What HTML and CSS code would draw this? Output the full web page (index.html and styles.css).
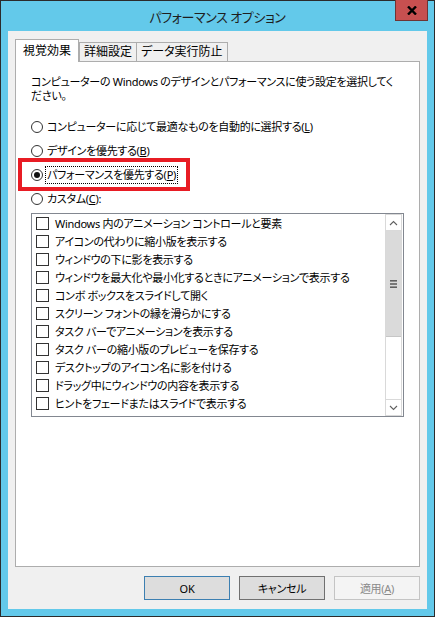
FILE: index.html
```html
<!DOCTYPE html>
<html lang="ja">
<head>
<meta charset="utf-8">
<title>パフォーマンス オプション</title>
<link rel="stylesheet" href="styles.css">
</head>
<body>
<div class="window">
  <div class="titlebar">
    <div class="title">パフォーマンス オプション</div>
    <div class="close">
      <svg width="10" height="9" viewBox="0 0 10 9"><path d="M1 0.5 L9 8.5 M9 0.5 L1 8.5" stroke="#000" stroke-width="2.4" fill="none"/></svg>
    </div>
  </div>
  <div class="client">
    <div class="tabs">
      <div class="tab active">視覚効果</div>
      <div class="tab">詳細設定</div>
      <div class="tab">データ実行防止</div>
    </div>
    <div class="panel">
      <p class="desc">コンピューターの Windows のデザインとパフォーマンスに使う設定を選択してく<br>ださい。</p>
      <div class="radios">
        <div class="radio-row"><span class="radio"></span><span class="label">コンピューターに応じて最適なものを自動的に選択する(<u>L</u>)</span></div>
        <div class="radio-row"><span class="radio"></span><span class="label">デザインを優先する(<u>B</u>)</span></div>
        <div class="radio-row highlight"><span class="radio checked"><span class="dot"></span></span><span class="label focus">パフォーマンスを優先する(<u>P</u>)</span></div>
        <div class="radio-row"><span class="radio"></span><span class="label">カスタム(<u>C</u>):</span></div>
      </div>
      <div class="listbox">
        <div class="items">
          <div class="item"><span class="check"></span>Windows 内のアニメーション コントロールと要素</div>
          <div class="item"><span class="check"></span>アイコンの代わりに縮小版を表示する</div>
          <div class="item"><span class="check"></span>ウィンドウの下に影を表示する</div>
          <div class="item"><span class="check"></span>ウィンドウを最大化や最小化するときにアニメーションで表示する</div>
          <div class="item"><span class="check"></span>コンボ ボックスをスライドして開く</div>
          <div class="item"><span class="check"></span>スクリーン フォントの縁を滑らかにする</div>
          <div class="item"><span class="check"></span>タスク バーでアニメーションを表示する</div>
          <div class="item"><span class="check"></span>タスク バーの縮小版のプレビューを保存する</div>
          <div class="item"><span class="check"></span>デスクトップのアイコン名に影を付ける</div>
          <div class="item"><span class="check"></span>ドラッグ中にウィンドウの内容を表示する</div>
          <div class="item"><span class="check"></span>ヒントをフェードまたはスライドで表示する</div>
        </div>
        <div class="scrollbar">
          <div class="sb-btn"><svg width="9" height="6" viewBox="0 0 9 6"><path d="M1 5 L4.5 1.5 L8 5" stroke="#606060" stroke-width="1.1" fill="none"/></svg></div>
          <div class="thumb"><svg width="7" height="8" viewBox="0 0 7 8"><rect x="0" y="0" width="7" height="1.6" fill="#606060"/><rect x="0" y="3.2" width="7" height="1.6" fill="#606060"/><rect x="0" y="6.4" width="7" height="1.6" fill="#606060"/></svg></div>
          <div class="track"></div>
          <div class="sb-btn"><svg width="9" height="6" viewBox="0 0 9 6"><path d="M1 1 L4.5 4.5 L8 1" stroke="#606060" stroke-width="1.1" fill="none"/></svg></div>
        </div>
      </div>
    </div>
    <div class="buttons">
      <div class="btn default">OK</div>
      <div class="btn">キャンセル</div>
      <div class="btn disabled">適用(<u>A</u>)</div>
    </div>
  </div>
</div>
</body>
</html>
```
FILE: styles.css
```css
html, body {
  margin: 0;
  padding: 0;
}
body {
  font-family: "Noto Sans", "Noto Sans CJK JP", sans-serif;
  font-size: 11px;
  letter-spacing: -0.3px;
  color: #000;
  font-feature-settings: "palt";
}
.window {
  width: 435px;
  height: 617px;
  box-sizing: border-box;
  border: 1px solid #2b2b2b;
  background: #63c9ea;
  display: flex;
  flex-direction: column;
}
.titlebar {
  height: 30px;
  flex: none;
  position: relative;
  display: flex;
  align-items: center;
  justify-content: center;
}
.title {
  font-size: 13px;
  letter-spacing: -0.4px;
  color: #1e1e1e;
  padding-top: 1px;
}
.close {
  position: absolute;
  top: -1px;
  right: 6px;
  width: 33px;
  height: 21px;
  box-sizing: border-box;
  background: #c75050;
  border: 1px solid #6e3434;
  border-top: none;
  display: flex;
  align-items: center;
  justify-content: center;
}
.client {
  flex: 1;
  margin: 0 7px 7px;
  background: #f0f0f0;
  padding: 8px 7px 9px;
  display: flex;
  flex-direction: column;
}
.tabs {
  height: 22px;
  flex: none;
  display: flex;
  align-items: flex-end;
}
.tab {
  height: 19px;
  box-sizing: border-box;
  border: 1px solid #adadad;
  border-bottom: none;
  padding: 0 4px;
  background: #f0f0f0;
  display: flex;
  align-items: center;
  line-height: 1;
  font-size: 12px;
  letter-spacing: 0;
}
.tab + .tab {
  border-left: none;
}
.tab.active {
  height: 23px;
  margin-bottom: -1px;
  padding: 0 7px;
  background: #fff;
  position: relative;
  z-index: 1;
  padding-bottom: 1px;
}
.tab.active + .tab {
  border-left: 1px solid #adadad;
}
.panel {
  flex: none;
  height: 506px;
  box-sizing: border-box;
  background: #fff;
  border: 1px solid #adadad;
  padding: 13px 15px 0;
}
.desc {
  margin: 0;
  line-height: 14px;
  white-space: nowrap;
}
.radios {
  margin-top: 12px;
}
.radio-row {
  height: 24px;
  display: flex;
  align-items: center;
  position: relative;
}
.radio {
  width: 12px;
  height: 12px;
  box-sizing: border-box;
  border: 1px solid #333;
  border-radius: 50%;
  background: #fff;
  margin-right: 4px;
  flex: none;
  display: flex;
  align-items: center;
  justify-content: center;
}
.dot {
  width: 6px;
  height: 6px;
  border-radius: 50%;
  background: #111;
}
.label {
  line-height: 14px;
  white-space: nowrap;
}
.focus {
  outline: 1px dotted #000;
  outline-offset: 0;
  padding: 1px 1px 1px 1px;
  margin-left: -1px;
}
.highlight::after {
  content: "";
  position: absolute;
  left: -13px;
  top: -5px;
  width: 172px;
  height: 33px;
  box-sizing: border-box;
  border: 4px solid #e81c24;
  pointer-events: none;
}
.listbox {
  margin-top: 2px;
  width: 373px;
  height: 204px;
  box-sizing: border-box;
  border: 1px solid #828790;
  display: flex;
  overflow: hidden;
}
.items {
  flex: 1;
  padding-left: 4px;
  overflow: hidden;
}
.item {
  height: 18px;
  display: flex;
  align-items: center;
  white-space: nowrap;
}
.check {
  width: 13px;
  height: 13px;
  box-sizing: border-box;
  border: 1px solid #333;
  background: #fff;
  margin-right: 6px;
  flex: none;
}
.scrollbar {
  width: 17px;
  flex: none;
  display: flex;
  flex-direction: column;
  box-sizing: border-box;
  border-left: 1px solid #d9d9d9;
  border-right: 1px solid #d9d9d9;
  margin-right: 1px;
}
.sb-btn {
  height: 17px;
  flex: none;
  box-sizing: border-box;
  border-top: 1px solid #d9d9d9;
  border-bottom: 1px solid #d9d9d9;
  background: #fff;
  display: flex;
  align-items: center;
  justify-content: center;
}
.thumb {
  height: 106px;
  flex: none;
  box-sizing: border-box;
  background: #dadada;
  border-bottom: 1px solid #c6c6c6;
  display: flex;
  align-items: center;
  justify-content: center;
}
.track {
  flex: 1;
  background: #fff;
}
.buttons {
  margin-top: 9px;
  display: flex;
  justify-content: flex-end;
  gap: 9px;
}
.btn {
  width: 86px;
  height: 24px;
  box-sizing: border-box;
  border: 1px solid #707070;
  background: #dddddd;
  display: flex;
  align-items: center;
  justify-content: center;
}
.btn.default {
  border-color: #3c7fb1;
}
.btn.disabled {
  border-color: #c4c4c4;
  background: #f4f4f4;
  color: #8a8a8a;
}
```
